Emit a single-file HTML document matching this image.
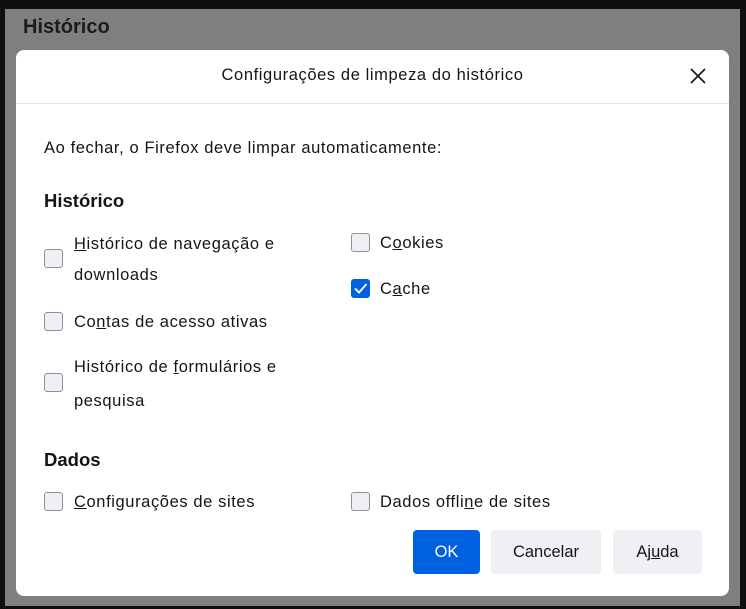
<!DOCTYPE html><html><head><style>
body{margin:0;width:746px;height:609px;background:#0f0f0f;font-family:"Liberation Sans",sans-serif;color:#15141a;position:relative;overflow:hidden}
.bg{position:absolute;left:5px;top:9px;width:735px;height:597px;background:#7f7f7f}
.bt{position:absolute;left:23px;top:16px;font-size:20px;font-weight:bold;color:#1c1c1c}
.dlg{position:absolute;left:16px;top:50px;width:713px;height:546px;background:#fff;border-radius:8px}
.t{position:absolute;font-size:16.5px;letter-spacing:0.6px;white-space:nowrap}
.cb{position:absolute;width:17px;height:17px;border:1px solid #8f8f9d;border-radius:3px;background:#f0f0f4}
.h{position:absolute;font-size:18.5px;font-weight:bold}
.btn{position:absolute;top:480px;height:44px;border-radius:4px;background:#f0f0f4;font-size:16.5px;display:flex;align-items:center;justify-content:center}
u{text-decoration:underline}
</style></head><body>
<div class="bg"></div>
<div class="bt">Histórico</div>
<div class="dlg">
<div class="t" style="left:0;width:713px;text-align:center;top:16px">Configurações de limpeza do histórico</div>
<svg style="position:absolute;left:674px;top:18px" width="16" height="16"><path d="M1 1L15 15M15 1L1 15" stroke="#15141a" stroke-width="1.6"/></svg>
<div style="position:absolute;left:0;top:53px;width:713px;height:1px;background:#e0e0e6"></div>
<div class="t" style="left:28px;top:89px">Ao fechar, o Firefox deve limpar automaticamente:</div>
<div class="h" style="left:28px;top:140px">Histórico</div>
<div class="cb" style="left:28px;top:199px"></div>
<div class="t" style="left:58px;top:185px"><u>H</u>istórico de navegação e</div>
<div class="t" style="left:58px;top:216px">downloads</div>
<div class="cb" style="left:28px;top:262px"></div>
<div class="t" style="left:58px;top:263px">Co<u>n</u>tas de acesso ativas</div>
<div class="cb" style="left:28px;top:323px"></div>
<div class="t" style="left:58px;top:308px">Histórico de <u>f</u>ormulários e</div>
<div class="t" style="left:58px;top:342px">pesquisa</div>
<div class="cb" style="left:335px;top:183px"></div>
<div class="t" style="left:364px;top:184px">C<u>o</u>okies</div>
<div class="cb" style="left:335px;top:229px;background:#0061e0;border-color:#0061e0"><svg width="17" height="17" style="position:absolute;left:0;top:0"><path d="M3 8.5L7 12.5L14.5 4" fill="none" stroke="#fff" stroke-width="1.8"/></svg></div>
<div class="t" style="left:364px;top:230px">C<u>a</u>che</div>
<div class="h" style="left:28px;top:399px">Dados</div>
<div class="cb" style="left:28px;top:442px"></div>
<div class="t" style="left:58px;top:443px"><u>C</u>onfigurações de sites</div>
<div class="cb" style="left:335px;top:442px"></div>
<div class="t" style="left:364px;top:443px">Dados offli<u>n</u>e de sites</div>
<div class="btn" style="left:397px;width:67px;background:#0061e0;color:#fff">OK</div>
<div class="btn" style="left:475px;width:110px">Cancelar</div>
<div class="btn" style="left:597px;width:89px">Aj<u>u</u>da</div>
</div>
</body></html>
